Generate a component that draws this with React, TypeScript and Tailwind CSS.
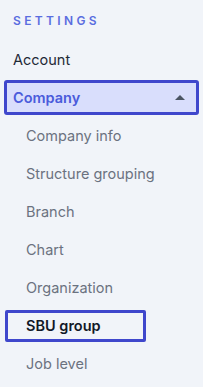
import React from "react";

const subItems = [
  "Company info",
  "Structure grouping",
  "Branch",
  "Chart",
  "Organization",
  "SBU group",
  "Job level",
];

export default function App() {
  return (
    <div
      className="w-[203px] h-[387px] bg-[#f1f4f9] overflow-hidden"
      style={{ fontFamily: "Inter, 'Noto Sans', sans-serif" }}
    >
      <div className="pt-[13px] pl-[13px] text-[12px] leading-[16px] font-semibold tracking-[0.28em] text-[#5a6de0]">
        SETTINGS
      </div>
      <div className="mt-[21px] pl-[13px] text-[14.5px] leading-[20px] text-[#1f2937]">
        Account
      </div>
      <div className="mt-[10px] ml-[4px] mr-[4px] h-[35px] border-[3px] border-[#3f47cc] rounded-[3px] bg-[#d9defc] flex items-center justify-between pl-[6px] pr-[11px]">
        <span className="text-[14.5px] leading-[20px] font-semibold text-[#4a5bdb]">Company</span>
        <svg width="10" height="5" viewBox="0 0 10 5">
          <path d="M0 5 L5 0 L10 5 Z" fill="#4b5563" />
        </svg>
      </div>
      <div className="mt-[5px] flex flex-col gap-[6px]">
        {subItems.map((item) => {
          const active = item === "SBU group";
          return (
            <div
              key={item}
              className={
                active
                  ? "ml-[5px] w-[141px] h-[32px] border-[3px] border-[#3f47cc] rounded-[2px] flex items-center pl-[18px] text-[14.5px] leading-[20px] font-semibold text-[#111827]"
                  : "ml-[5px] w-[141px] h-[32px] border-[3px] border-transparent flex items-center pl-[18px] text-[14.5px] leading-[20px] text-[#6b7280] whitespace-nowrap"
              }
            >
              {item}
            </div>
          );
        })}
      </div>
    </div>
  );
}
